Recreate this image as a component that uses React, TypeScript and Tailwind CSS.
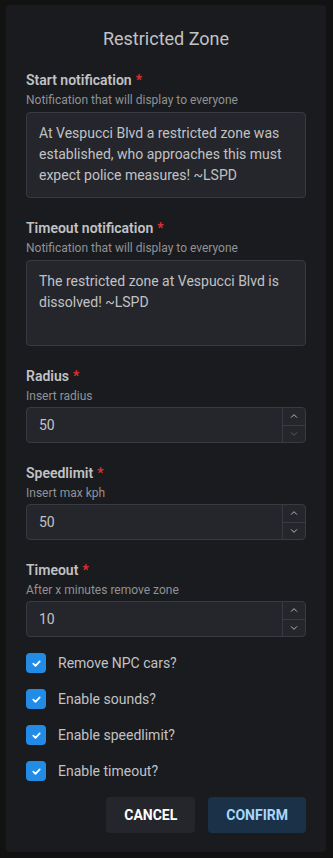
import { ReactNode } from "react";

const font = { fontFamily: "Roboto, 'Liberation Sans', sans-serif" };

function Label({ children, description }: { children: ReactNode; description: string }) {
  return (
    <div>
      <div className="text-[14px] leading-[22px] font-semibold text-[#c1c2c5]">
        {children}
        <span className="ml-[4px] text-[#e03131]">*</span>
      </div>
      <div className="text-[12px] leading-[18px] text-[#909296]">{description}</div>
    </div>
  );
}

function TextField({ label, description, value }: { label: string; description: string; value: string }) {
  return (
    <div className="flex flex-col">
      <Label description={description}>{label}</Label>
      <div className="mt-[3px] h-[86px] rounded-[4px] border border-[#373a40] bg-[#25262b] px-[12px] pt-[10px] text-[14px] leading-[21px] text-[#c1c2c5]">
        {value}
      </div>
    </div>
  );
}

function Chevron({ up, dim }: { up?: boolean; dim?: boolean }) {
  return (
    <svg width="10" height="10" viewBox="0 0 15 15" fill="none" className={dim ? "text-[#5c5f66]" : "text-[#c1c2c5]"}>
      <path
        d={up ? "M3.5 9.5L7.5 5.5L11.5 9.5" : "M3.5 5.5L7.5 9.5L11.5 5.5"}
        stroke="currentColor"
        strokeWidth="1.4"
        strokeLinecap="round"
        strokeLinejoin="round"
      />
    </svg>
  );
}

function NumberField({ label, description, value, dimDown }: { label: string; description: string; value: string; dimDown?: boolean }) {
  return (
    <div className="flex flex-col">
      <Label description={description}>{label}</Label>
      <div className="mt-[2px] flex h-[36px] rounded-[4px] border border-[#373a40] bg-[#25262b] text-[14px] text-[#c1c2c5]">
        <div className="flex flex-1 items-center pl-[12px]">{value}</div>
        <div className="flex w-[23px] flex-col border-l border-[#373a40]">
          <div className="flex flex-1 items-center justify-center border-b border-[#373a40]">
            <Chevron up />
          </div>
          <div className="flex flex-1 items-center justify-center">
            <Chevron dim={dimDown} />
          </div>
        </div>
      </div>
    </div>
  );
}

function Check({ label }: { label: string }) {
  return (
    <div className="flex h-[20px] items-center gap-[12px]">
      <div className="flex h-[20px] w-[20px] items-center justify-center rounded-[4px] bg-[#228be6]">
        <svg width="11" height="11" viewBox="0 0 12 12" fill="none">
          <path d="M2.5 6.2L4.9 8.5L9.5 3.7" stroke="#fff" strokeWidth="2" strokeLinecap="round" strokeLinejoin="round" />
        </svg>
      </div>
      <span className="text-[14px] text-[#c1c2c5]">{label}</span>
    </div>
  );
}

export default function App() {
  return (
    <div className="min-h-[858px] w-[333px] bg-[#121212] pl-[6px] pt-[5px]" style={font}>
      <div className="flex w-[320px] flex-col rounded-[4px] bg-[#1a1b1e] px-[20px] pb-[19px] pt-[20px]">
        <h1 className="text-center text-[18px] leading-[28px] text-[#c1c2c5]">Restricted Zone</h1>
        <div className="mt-[16px] flex flex-col gap-[19px]">
          <TextField
            label="Start notification"
            description="Notification that will display to everyone"
            value="At Vespucci Blvd a restricted zone was established, who approaches this must expect police measures! ~LSPD"
          />
          <TextField
            label="Timeout notification"
            description="Notification that will display to everyone"
            value="The restricted zone at Vespucci Blvd is dissolved! ~LSPD"
          />
          <NumberField label="Radius" description="Insert radius" value="50" dimDown />
          <NumberField label="Speedlimit" description="Insert max kph" value="50" />
          <NumberField label="Timeout" description="After x minutes remove zone" value="10" />
        </div>
        <div className="mt-[16px] flex flex-col gap-[16px]">
          <Check label="Remove NPC cars?" />
          <Check label="Enable sounds?" />
          <Check label="Enable speedlimit?" />
          <Check label="Enable timeout?" />
        </div>
        <div className="mt-[16px] flex justify-end gap-[13px]">
          <button className="h-[36px] rounded-[4px] bg-[#25262b] px-[18px] text-[14px] font-bold text-white">CANCEL</button>
          <button className="h-[36px] rounded-[4px] bg-[#1b3147] px-[18px] text-[14px] font-bold text-[#a5d8ff]">CONFIRM</button>
        </div>
      </div>
    </div>
  );
}
